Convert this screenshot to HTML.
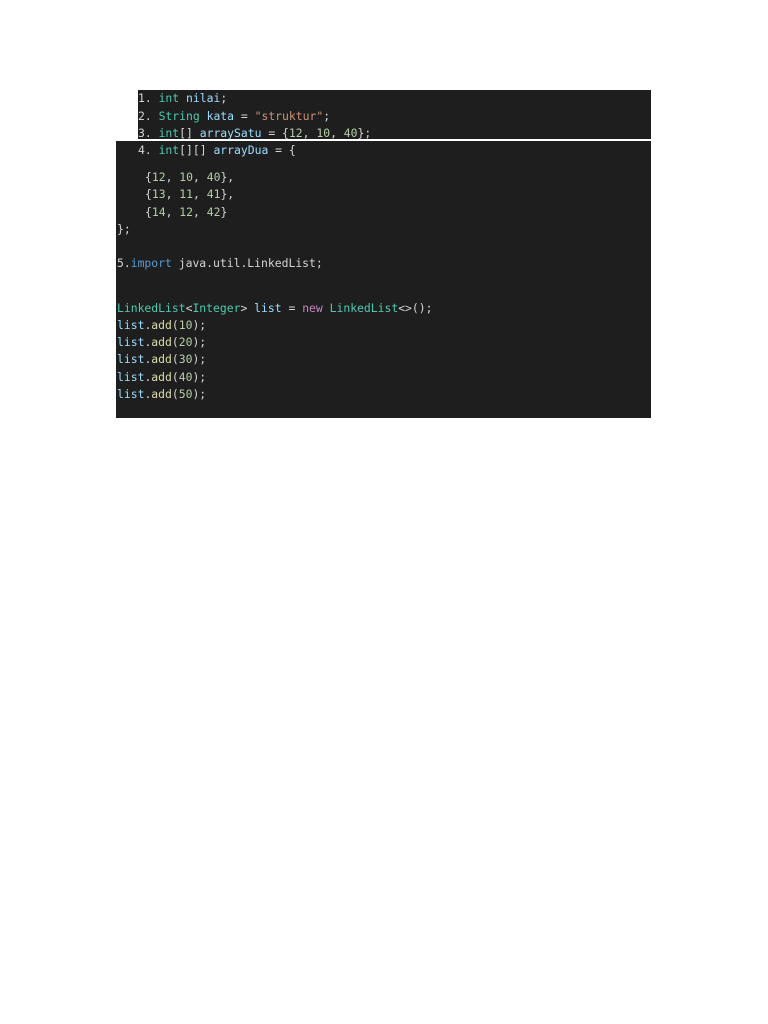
<!DOCTYPE html>
<html><head><style>
body{margin:0;background:#fff;width:768px;height:1024px;position:relative;overflow:hidden}
.b{position:absolute;background:#1e1e1e}
.l{position:absolute;font-family:"DejaVu Sans Mono","Liberation Mono",monospace;font-size:11.4px;line-height:14px;color:#d4d4d4;white-space:pre}
.t{color:#4ec9b0}.v{color:#9cdcfe}.s{color:#ce9178}.n{color:#b5cea8}.k{color:#569cd6}.p{color:#c586c0}.f{color:#dcdcaa}
</style></head><body>
<div class="b" style="left:138px;top:90px;width:513px;height:49px"></div>
<div class="b" style="left:116px;top:141px;width:535px;height:277px"></div>
<div class="l" style="left:138px;top:91px">1. <span class="t">int</span> <span class="v">nilai</span>;</div>
<div class="l" style="left:138px;top:109px">2. <span class="t">String</span> <span class="v">kata</span> = <span class="s">"struktur"</span>;</div>
<div class="l" style="left:138px;top:126px">3. <span class="t">int</span>[] <span class="v">arraySatu</span> = {<span class="n">12</span>, <span class="n">10</span>, <span class="n">40</span>};</div>
<div class="l" style="left:138px;top:143px">4. <span class="t">int</span>[][] <span class="v">arrayDua</span> = {</div>
<div class="l" style="left:145px;top:170px">{<span class="n">12</span>, <span class="n">10</span>, <span class="n">40</span>},</div>
<div class="l" style="left:145px;top:187px">{<span class="n">13</span>, <span class="n">11</span>, <span class="n">41</span>},</div>
<div class="l" style="left:145px;top:205px">{<span class="n">14</span>, <span class="n">12</span>, <span class="n">42</span>}</div>
<div class="l" style="left:117px;top:222px">};</div>
<div class="l" style="left:117px;top:256px">5.<span class="k">import</span> java.util.LinkedList;</div>
<div class="l" style="left:117px;top:301px"><span class="t">LinkedList</span>&lt;<span class="t">Integer</span>&gt; <span class="v">list</span> = <span class="p">new</span> <span class="t">LinkedList</span>&lt;&gt;();</div>
<div class="l" style="left:117px;top:318px"><span class="v">list</span>.<span class="f">add</span>(<span class="n">10</span>);</div>
<div class="l" style="left:117px;top:335px"><span class="v">list</span>.<span class="f">add</span>(<span class="n">20</span>);</div>
<div class="l" style="left:117px;top:352px"><span class="v">list</span>.<span class="f">add</span>(<span class="n">30</span>);</div>
<div class="l" style="left:117px;top:370px"><span class="v">list</span>.<span class="f">add</span>(<span class="n">40</span>);</div>
<div class="l" style="left:117px;top:387px"><span class="v">list</span>.<span class="f">add</span>(<span class="n">50</span>);</div>
</body></html>
